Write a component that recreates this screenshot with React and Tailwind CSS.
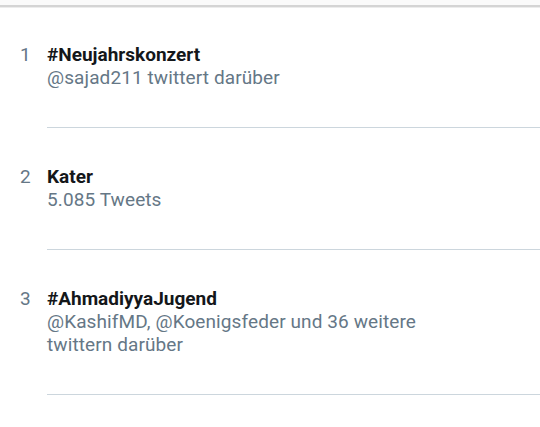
const trends = [
  { rank: 1, title: '#Neujahrskonzert', meta: ['@sajad211 twittert darüber'] },
  { rank: 2, title: 'Kater', meta: ['5.085 Tweets'] },
  { rank: 3, title: '#AhmadiyyaJugend', meta: ['@KashifMD, @Koenigsfeder und 36 weitere', 'twittern darüber'] },
];

const App = () => (
  <div className="w-[540px] h-[427px] overflow-hidden bg-white font-['Roboto',sans-serif] text-[19px] leading-[23px]">
    <div className="h-[5px] bg-[#fafafa]" />
    <div className="h-[2px] bg-[#d4d4d4]" />
    <div className="h-[1px] bg-[#ececec]" />
    <div className="pt-[35px]">
      {trends.map((t) => (
        <div key={t.rank} className="flex">
          <div className="w-[47px] shrink-0 pl-[20px] text-[#657786]">{t.rank}</div>
          <div className="flex-1 pb-[38px] border-b border-[#ccd6dd]">
            <div className="font-bold text-[#14171a]">{t.title}</div>
            {t.meta.map((m) => (
              <div key={m} className="text-[#657786] tracking-[0.1px]">{m}</div>
            ))}
          </div>
        </div>
      )).reduce((acc, el, i) => (i === 0 ? [el] : [...acc, <div key={'s' + i} className="h-[37px]" />, el]), [])}
    </div>
  </div>
);

export default App;
